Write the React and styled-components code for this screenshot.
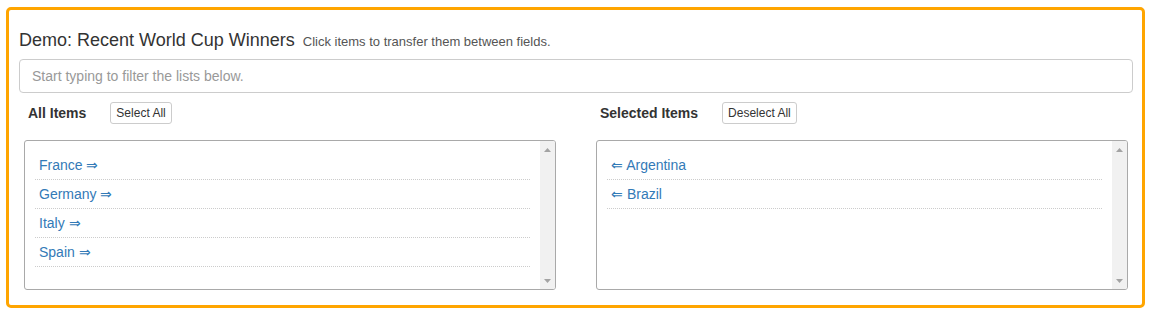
import React from 'react';
import styled, { createGlobalStyle } from 'styled-components';

const GlobalStyle = createGlobalStyle`
    html, body {
        margin: 0;
        padding: 0;
        background: #fff;
    }
    body {
        font-family: "Liberation Sans", Arial, sans-serif;
        font-size: 14px;
        color: #333;
    }
`;

const allItems = ['France', 'Germany', 'Italy', 'Spain'];
const selectedItems = ['Argentina', 'Brazil'];

export default function App() {
    return (
        <>
            <GlobalStyle />
            <Page>
                <Frame>
                    <TitleRow>
                        <Title>Demo: Recent World Cup Winners</Title>
                        <Hint>Click items to transfer them between fields.</Hint>
                    </TitleRow>
                    <Filter placeholder='Start typing to filter the lists below.' />
                    <Columns>
                        <Field side='left'>
                            <FieldHeader>
                                <FieldLabel>All Items</FieldLabel>
                                <SmallButton>Select All</SmallButton>
                            </FieldHeader>
                            <ListBox>
                                <List>
                                    {allItems.map((name) => (
                                        <Item key={name}>{name} &rArr;</Item>
                                    ))}
                                </List>
                                <Scrollbar />
                            </ListBox>
                        </Field>
                        <Field side='right'>
                            <FieldHeader>
                                <FieldLabel>Selected Items</FieldLabel>
                                <SmallButton>Deselect All</SmallButton>
                            </FieldHeader>
                            <ListBox>
                                <List>
                                    {selectedItems.map((name) => (
                                        <Item key={name}>&lArr; {name}</Item>
                                    ))}
                                </List>
                                <Scrollbar />
                            </ListBox>
                        </Field>
                    </Columns>
                </Frame>
            </Page>
        </>
    );
}

const Scrollbar = () => {
    return (
        <Track>
            <svg width='15' height='148' viewBox='0 0 15 148'>
                <polygon points='4,11 11,11 7.5,7' fill='#a3a3a3' />
                <polygon points='4,138 11,138 7.5,142' fill='#a3a3a3' />
            </svg>
        </Track>
    );
};

const Page = styled.div`
    padding: 7px 10px 4px 6px;
`;

const Frame = styled.div`
    border: 3px solid #ffa500;
    border-radius: 5px;
    padding: 20px 9px 14px 10px;
    height: 301px;
    box-sizing: border-box;
`;

const TitleRow = styled.div`
    display: flex;
    align-items: baseline;
    gap: 8px;
    height: 20px;
    line-height: 20px;
`;

const Title = styled.h2`
    margin: 0;
    font-size: 18px;
    font-weight: normal;
    color: #333;
`;

const Hint = styled.span`
    font-size: 13px;
    color: #555;
`;

const Filter = styled.input`
    display: block;
    box-sizing: border-box;
    width: 100%;
    height: 34px;
    margin-top: 9px;
    padding: 6px 12px;
    border: 1px solid #ccc;
    border-radius: 4px;
    font-family: "Liberation Sans", Arial, sans-serif;
    font-size: 14px;
    color: #555;
    &::placeholder {
        color: #999;
    }
`;

const Columns = styled.div`
    display: grid;
    grid-template-columns: 1fr 1fr;
    margin-top: 6px;
`;

const Field = styled.div`
    padding: ${({ side }) => (side === 'left' ? '0 20px 0 5px' : '0 5px 0 20px')};
`;

const FieldHeader = styled.div`
    display: flex;
    align-items: center;
    height: 28px;
    padding-left: 4px;
`;

const FieldLabel = styled.h4`
    margin: 0 24px 0 0;
    font-size: 14px;
    font-weight: bold;
    color: #333;
`;

const SmallButton = styled.button`
    height: 22px;
    padding: 0 5px;
    border: 1px solid #ccc;
    border-radius: 3px;
    background: #fff;
    font-family: "Liberation Sans", Arial, sans-serif;
    font-size: 12px;
    color: #333;
`;

const ListBox = styled.div`
    display: flex;
    height: 150px;
    box-sizing: border-box;
    margin-top: 13px;
    border: 1px solid #a9a9a9;
    border-radius: 3px;
    overflow: hidden;
`;

const List = styled.ul`
    flex: 1;
    list-style: none;
    margin: 0;
    padding: 10px 10px 0 10px;
`;

const Item = styled.li`
    height: 29px;
    box-sizing: border-box;
    padding: 0 4px;
    line-height: 28px;
    border-bottom: 1px dotted #ccc;
    font-size: 14px;
    color: #337ab7;
    cursor: pointer;
`;

const Track = styled.div`
    width: 15px;
    background: #f1f1f1;
    display: flex;
`;
